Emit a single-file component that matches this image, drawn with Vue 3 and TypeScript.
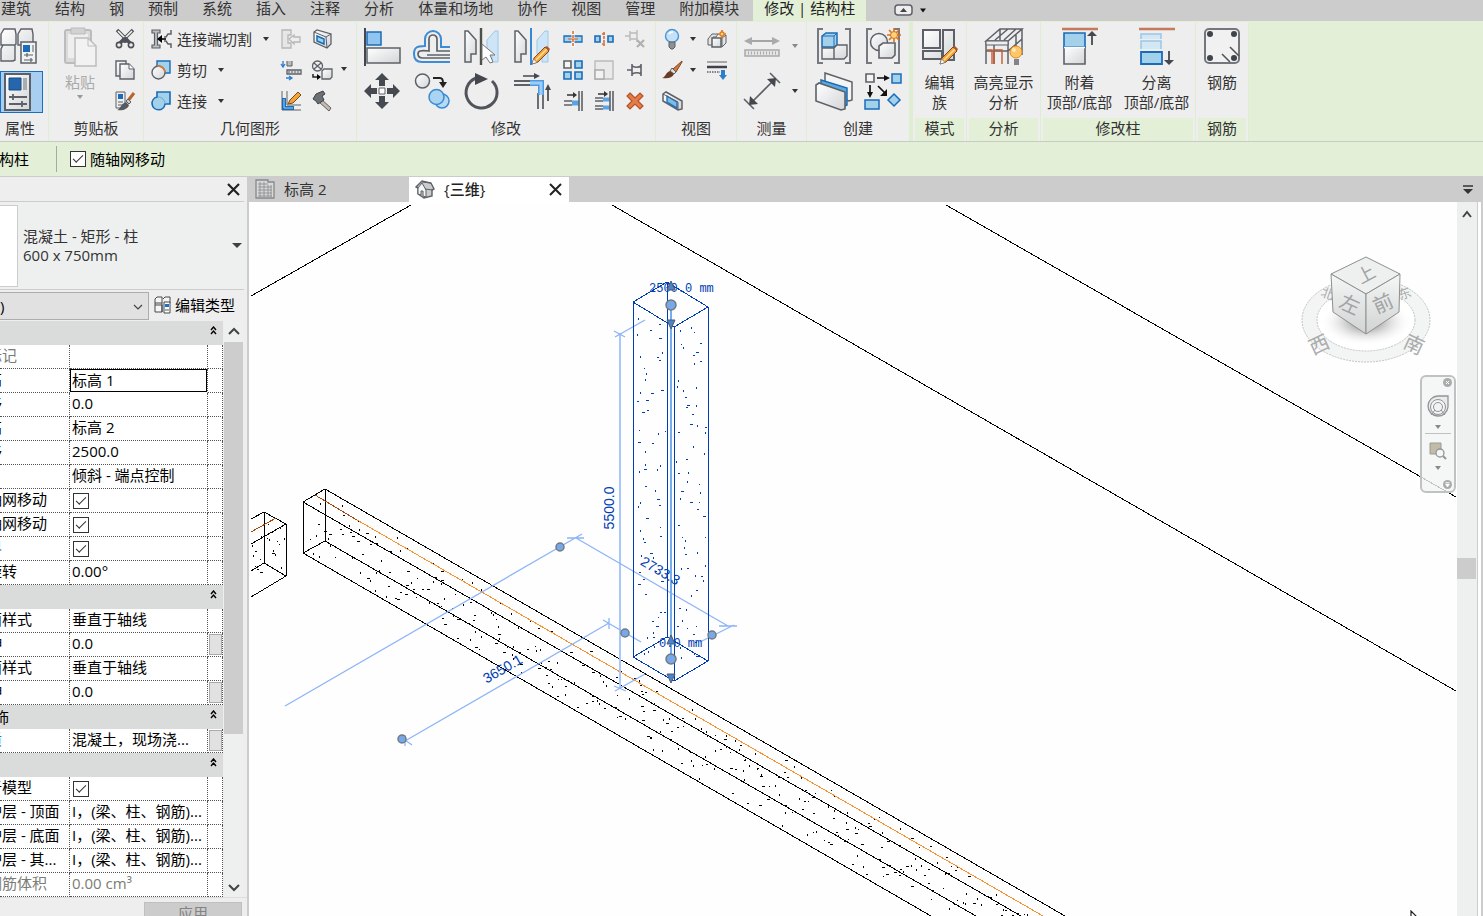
<script setup lang="ts">
import { ref } from 'vue'

const menuTabs: string[] = ['建筑', '结构', '钢', '预制', '系统', '插入', '注释', '分析', '体量和场地', '协作', '视图', '管理', '附加模块']

const G = '#5d6167'
const B = '#1a6cb8'
const LB = '#a4d1ea'
const brackets = `<path d="M7 1H2v34h5M29 1h5v34h-5" fill="none" stroke="#767a80" stroke-width="2"/>`
const burst = (x: number, y: number, r: number): string =>
  `<g stroke="#d9731a" stroke-width="1.6"><path d="M${x - r} ${y}h${2 * r}M${x} ${y - r}v${2 * r}M${x - r + 2} ${y - r + 2}l${2 * r - 4} ${2 * r - 4}M${x + r - 2} ${y - r + 2}l${4 - 2 * r} ${2 * r - 4}"/></g><circle cx="${x}" cy="${y}" r="${r / 2}" fill="#ffd27a" stroke="#d9731a"/>`
const pencil = (x: number, y: number): string =>
  `<g transform="translate(${x} ${y})"><path d="M0 18l2-6L13 1l4 4L6 16z" fill="#f4a338" stroke="#7a4a1c"/><path d="M4 14L15 3" stroke="#ffdf9a" stroke-width="1.5"/><path d="M13 1l2-1 3 3-1 2z" fill="#b4532e"/><path d="M0 18l1.500-5 3.500 3.500z" fill="#fff" stroke="#666" stroke-width=".6"/></g>`

const small: Record<string, string> = {
  cut: `<g fill="none" stroke="#4d5157"><path d="M2 1l14 14M18 1L4 15" stroke-width="3.500"/><path d="M3 2l7 7M17 2l-6 6" stroke="#f5f5f5" stroke-width="1.600"/><circle cx="4" cy="16" r="2.600" fill="#eee" stroke-width="1.600"/><circle cx="16" cy="16" r="2.600" fill="#eee" stroke-width="1.600"/></g><circle cx="10" cy="11" r="3" fill="#4d5157"/>`,
  copy: `<g fill="url(#face)" stroke="${G}" stroke-width="1.400"><path d="M1 1h10v15H1z"/><path d="M5 4h9l5 5v10H5z"/></g><path d="M14 4v5h5" fill="#fff" stroke="${G}"/>`,
  match: `<path d="M1 1h9v16H1z" fill="#eee" stroke="${G}"/><path d="M3 3h5v5H3z" fill="${B}"/><path d="M3 11h5M3 14h5" stroke="${G}"/><path d="M19 2l-7 9" stroke="#b8642c" stroke-width="3"/><path d="M13 8l3 3-2 2-3-3z" fill="#ccc" stroke="${G}"/><path d="M11 11l3 3c-1 4-6 6-12 5 4-1 3-6 9-8z" fill="#565a60"/>`,
  cope: `<path d="M1 1h8v3H6.500v12H9v3H1v-3h2.500V4H1z" fill="#bbbfc3" stroke="${G}" stroke-width="1.200"/><path d="M20 1v4h-3l-2 3h-2M20 19v-4h-3l-2-3h-2" fill="none" stroke="${G}" stroke-width="1.500"/><path d="M15 10H8" stroke="#000" stroke-width="1.600"/><path d="M6 10l5-4v8z"/>`,
  trim: `<path d="M6 1h13v12H6z" fill="${LB}" stroke="${B}" stroke-width="1.400"/><circle cx="7.500" cy="12.500" r="6.500" fill="url(#face)" stroke="${G}" stroke-width="1.400"/><path d="M6 6.500a6.500 6.500 0 0 1 8 6" fill="none" stroke="#e4762c" stroke-width="1.600"/>`,
  join: `<path d="M6 1h13v12h-5a6.500 6.500 0 1 1-8-7z" fill="${LB}" stroke="${B}" stroke-width="1.600"/><path d="M7 6c4 0 7 3 7 7" fill="none" stroke="#6aa7d6"/>`,
  notch: `<path d="M1 1h9v5h-3v8h3v5H1z" fill="#e6e6e6" stroke="#b7b7b7" stroke-width="1.300"/><path d="M8 10l5-4v2h6v5h-6v2z" fill="#eee" stroke="#b7b7b7" stroke-width="1.300"/>`,
  face: `<path d="M2 3l3-2 14 4v10l-4 4L2 13z" fill="url(#face)" stroke="${G}" stroke-width="1.300"/><path d="M2 3l12 5 5-3M14 8l1 11" fill="none" stroke="${G}"/><path d="M5 7l7 3v5l-7-3z" fill="${LB}" stroke="${B}" stroke-width="1.500"/>`,
  beamcut: `<path d="M2 1v5M0 4l2 3 2-3" stroke="#2d7dd2" fill="none" stroke-width="1.300"/><path d="M6 1v5h5V1" fill="#bbb" stroke="${G}"/><path d="M6 10h14v4H6z" fill="#ddd" stroke="${G}" stroke-width="1.300"/><path d="M7 12h12" stroke="${G}" stroke-dasharray="2 1"/><path d="M5 18h5M8 16l3 2-3 2" stroke="#2d7dd2" fill="none" stroke-width="1.300"/>`,
  split: `<circle cx="5.500" cy="6" r="5" fill="#eee" stroke="${G}" stroke-width="1.300"/><path d="M2 3l7 6M9 3L2 9" stroke="${G}" stroke-width="1.300"/><path d="M1 14v3h5" stroke="#222" fill="none" stroke-width="1.500"/><path d="M5 14l4 3-4 3z"/><path d="M10 11l2-2h8v8l-2 2h-8z" fill="url(#face)" stroke="${G}" stroke-width="1.300"/>`,
  wall: `<path d="M1 0v19h19M6 0v14h14" fill="none" stroke="${G}"/><path d="M3 7v10h10" fill="none" stroke="${B}" stroke-width="4"/><path d="M3 8v9h9" fill="none" stroke="${LB}"/><path d="M7 13l2-4 8-8 3 3-8 8z" fill="#f4a338" stroke="#7a4a1c"/>`,
  hammer: `<path d="M9 8l10 9-2 3L7 11z" fill="#c5b9a9" stroke="${G}"/><path d="M1 8l3-5 7-3 2 3-3 2 2 4-6 4-2-3z" fill="#6c6f73" stroke="#3d4044"/>`,
  splitEl: `<path d="M1 7h18v6H1z" fill="${LB}" stroke="${B}" stroke-width="1.300"/><path d="M10 2v16" stroke="#fff" stroke-width="3"/><path d="M10 2v16" stroke="#dc6f36" stroke-width="1.600" stroke-dasharray="3 1"/><path d="M5 10h10" stroke="#dc6f36" stroke-width="1.200"/>`,
  splitGap: `<path d="M1 7h5v6H1zM14 7h5v6h-5z" fill="${LB}" stroke="${B}" stroke-width="1.600"/><path d="M10 3v14M8 5h4M8 15h4" stroke="#dc6f36" stroke-width="1.600" stroke-dasharray="3 1"/>`,
  unpin: `<path d="M0 7h5M5 2v10M5 4h7M5 10h7M12 1v12" stroke="#bababa" fill="none" stroke-width="1.400"/><path d="M12 11l7 7M19 11l-7 7" stroke="#b0b0b0" stroke-width="2.200"/>`,
  array: `<path d="M1 1h7v7H1z" fill="#f4f4f4" stroke="${G}" stroke-width="1.600"/><path d="M12 1h7v7h-7zM1 12h7v7H1zM12 12h7v7h-7z" fill="${LB}" stroke="${B}" stroke-width="1.600"/>`,
  scale: `<path d="M1 1h18v18H1z" fill="#eaeaea" stroke="#bbb" stroke-width="1.400"/><path d="M1 10h9v9H1z" fill="#f2f2f2" stroke="#aaa" stroke-width="1.400"/>`,
  pin: `<path d="M2 10h5M7 4v12M7 6c4 2 6 2 9 0M7 14c4-2 6-2 9 0M16 4v12" stroke="${G}" fill="none" stroke-width="1.600"/>`,
  trimOne: `<path d="M4 4h7" stroke="#333" stroke-width="1.500"/><path d="M10 1l4 3-4 3z" fill="#333"/><path d="M1 10h8M1 14h8" stroke="${G}" stroke-width="1.300"/><path d="M9 9.500h7v5H9z" fill="#5aa4e6"/><path d="M16 0v20M19 0v20" stroke="${G}" stroke-width="1.600"/>`,
  trimMany: `<path d="M4 3h7" stroke="#333" stroke-width="1.500"/><path d="M10 0l4 3-4 3z" fill="#333"/><path d="M1 7h8M1 10h8M1 15h8M1 18h8" stroke="${G}" stroke-width="1.300"/><path d="M9 6.500h7v4H9zM9 14.500h7v4H9z" fill="#5aa4e6"/><path d="M16 0v20M19 0v20" stroke="${G}" stroke-width="1.600"/>`,
  remove: `<path d="M5 2l5 5 5-5 3 3-5 5 5 5-3 3-5-5-5 5-3-3 5-5-5-5z" fill="#e57c48" stroke="#b5522a" stroke-width="1.200"/>`,
  bulb: `<circle cx="10" cy="7" r="6.500" fill="#c4e1f8" stroke="#4d96d2" stroke-width="1.400"/><path d="M7 5a4 4 0 0 1 4-2" stroke="#fff" stroke-width="1.600" fill="none"/><path d="M7 13h6v5l-2 2H9l-2-2z" fill="#8d9196" stroke="${G}"/>`,
  paint: `<path d="M20 1l-9 8 3 3 6-10z" fill="#cf7a3d" stroke="#87451f"/><path d="M10 8l4 4-2 2-4-3z" fill="#ddd" stroke="${G}"/><path d="M8 11l4 3c-2 4-6 5-12 4 4-1 3-5 8-7z" fill="#6a3a22"/>`,
  section: `<path d="M1 3l3-2 16 9v8l-4 1L1 10z" fill="url(#face)" stroke="${G}" stroke-width="1.500"/><path d="M5 5l10 6v6L5 11z" fill="#79bdec" stroke="${B}" stroke-width="1.300"/><path d="M1 3l15 8v8" fill="none" stroke="${G}"/>`,
  displace: `<path d="M1 10l4-5h6l-2 3H6v8H1zM15 9l4-3v8l-4 4z" fill="#e4e4e4" stroke="${G}"/><path d="M5 9h9v9H5z" fill="url(#face)" stroke="${G}" stroke-width="1.500"/>${burst(15, 5, 4)}`,
  linework: `<path d="M0 2h20" stroke="${G}"/><path d="M0 7h20" stroke="#3f4348" stroke-width="2.500"/><path d="M0 12h13" stroke="${G}" stroke-width="1.500" stroke-dasharray="1.500 1"/><path d="M14 10h4v5h2l-4 5-4-5h2z" fill="#2d7fcb"/>`
}

const large: Record<string, string> = {
  types: `<g fill="url(#face)" stroke="${G}" stroke-width="1.400"><path d="M1 6l3-5h11l1 5v10l-1 1H1zM18 6l3-5h11l1 5v10l-1 1H18zM1 21l2-4h12v15l-2 1H1z"/></g><path d="M21 14h15v21H21z" fill="#f2f2f2" stroke="${G}" stroke-width="1.500"/><path d="M23 17h7v7h-7z" fill="${B}"/><path d="M32 17h2v7h-2z" fill="#aaa"/><path d="M24 27h9M24 32h9M27 25v4M31 30v4" stroke="${G}" stroke-width="1.200"/>`,
  props: `<path d="M5 0h25v36H5z" fill="url(#face)" stroke="${G}" stroke-width="2"/><path d="M9 4h12v12H9z" fill="#2566ad" stroke="#174a85"/><path d="M23 4h4v12h-4z" fill="#a9adb1"/><path d="M9 23h18M9 30h18M13 20v6M22 27v6" stroke="${G}" stroke-width="1.800"/>`,
  paste: `<rect x="3" y="2" width="26" height="33" rx="2" fill="#dadada" stroke="#bcbcbc" stroke-width="2"/><path d="M6 6h20v24H6z" fill="#eee"/><path d="M9 0h14v6H9z" fill="#d2d2d2" stroke="#bbb"/><path d="M13 10h13l8 8v20H13z" fill="#f2f2f2" stroke="#bdbdbd" stroke-width="1.500"/><path d="M26 10v8h8" fill="none" stroke="#bdbdbd"/>`,
  align: `<path d="M1 0v38" stroke="#44484d" stroke-width="2"/><path d="M3 4h14v13H3z" fill="#8fc5ee" stroke="${B}" stroke-width="1.500"/><path d="M3 20h33v15H3z" fill="url(#face)" stroke="${G}" stroke-width="1.500"/>`,
  offset: `<path d="M36 19h-9V11a8 8 0 0 0-16 0v7C1 18 0 21 0 26c0 5 3 8 8 8h28" fill="none" stroke="#3d8cd6" stroke-width="2"/><path d="M36 23H23V11a4 4 0 0 0-8 0v12c-9-1-11 0-11 3s2 4 5 4h27M36 27H13" fill="none" stroke="${G}" stroke-width="1.700"/>`,
  mirrorPick: `<path d="M1 3h3l8 9v14H7v8H1z" fill="url(#face)" stroke="${G}" stroke-width="1.500"/><path d="M34 3h-3l-8 9v14h5v8h6z" fill="#cde5f7" stroke="#9cc8ea"/><path d="M17 0v37" stroke="#4b504a" stroke-width="2.400"/><path d="M18 16v16l4-3 4 6 3-1-3-7h5z" fill="#fff" stroke="#777"/>`,
  mirrorDraw: `<path d="M1 3h3l8 9v14H7v8H1z" fill="url(#face)" stroke="${G}" stroke-width="1.500"/><path d="M34 3h-3l-8 9v14h5v8h6z" fill="#cde5f7" stroke="#9cc8ea"/><path d="M17 0v37" stroke="#3688d4" stroke-width="2"/>${pencil(18, 18)}`,
  move: `<g fill="#454a51"><path d="M18 0l7 7h-4v6h-6V7h-4zM18 36l7-7h-4v-6h-6v6h-4zM0 18l7-7v4h6v6H7v4zM36 18l-7-7v4h-6v6h6v4z"/></g><path d="M15 15h6v6h-6z" fill="#fff" stroke="${G}"/>`,
  clone: `<circle cx="8.500" cy="8" r="7" fill="url(#face)" stroke="${G}" stroke-width="1.500"/><path d="M19 5h7q3 0 3 5" fill="none" stroke="#222" stroke-width="2"/><path d="M25 9h8l-4 6z" fill="#222"/><circle cx="28" cy="28" r="7" fill="#b7dbf5" stroke="#3b8ad2" stroke-width="1.500"/><circle cx="22.500" cy="24" r="7.500" fill="#a9d4f2" stroke="#3b8ad2" stroke-width="1.500"/>`,
  rotate: `<path d="M28 8a15.500 15.500 0 1 1-16-3" fill="none" stroke="#51555b" stroke-width="3"/><path d="M11 0l13 6-13 6z" fill="#44484e"/>`,
  corner: `<path d="M0 8h16M0 12h16M24 20v16M29 20v16" stroke="${G}" stroke-width="1.800"/><path d="M16 10h11v12" fill="none" stroke="#4c9ae2" stroke-width="6"/><path d="M16 10h11v12" fill="none" stroke="#9dcdf6" stroke-width="3"/><path d="M9 3h13M34 28V14" stroke="#44484e" stroke-width="1.700"/><path d="M20 0l6 3-6 3zM31 17l3-6 3 6z" fill="#44484e"/>`,
  measure: `<path d="M3 13h30" stroke="#a5a5a5" stroke-width="2"/><path d="M0 13l8-4v8zM36 13l-8-4v8z" fill="#aaa"/><path d="M1 22h34v6H1z" fill="#e5e5e5" stroke="#a9a9a9" stroke-width="1.500"/><path d="M4 25h29" stroke="#aaa" stroke-width="3" stroke-dasharray="1 2"/>`,
  dimension: `<path d="M7 30L31 6M0 26l10 10M26 0l10 10" stroke="${G}" stroke-width="1.600"/><path d="M5 32l1-9 8 8zM32 5l-1 9-8-8z" fill="#44484e"/>`,
  group: `${brackets}<path d="M6 8l4-3h11v12l-3 2H6z" fill="${LB}" stroke="${B}" stroke-width="1.500"/><path d="M6 8h12v11M18 8l3-3" fill="none" stroke="${B}"/><path d="M6 20h12v11H6zM18 20l3-3h10v11l-3 3H18z" fill="url(#face)" stroke="${G}" stroke-width="1.400"/>`,
  part: `${brackets}<circle cx="14" cy="14" r="8.500" fill="url(#face)" stroke="${G}" stroke-width="1.500"/><path d="M14 18l4-3h12v12l-3 3H14z" fill="url(#face)" stroke="${G}" stroke-width="1.600"/>${burst(29, 7, 7)}`,
  assembly: `<path d="M9 0l27 9v18l-3 1L9 19z" fill="#f4f4f4" stroke="${G}" stroke-width="1.500"/><path d="M5 7l26 8v17l-4 2L5 25z" fill="#5fa9e2" stroke="${B}" stroke-width="1.500"/><path d="M0 12l3-2 26 9v17l-4 1L0 28z" fill="url(#face)" stroke="${G}" stroke-width="1.600"/>`,
  similar: `<path d="M1 1h8v8H1z" fill="#f4f4f4" stroke="${G}" stroke-width="1.600"/><path d="M27 1h9v9h-9zM0 27h14v9H0zM29 21l6 6-6 6-6-6z" fill="${LB}" stroke="${B}" stroke-width="1.500"/><path d="M12 5h9M5 12v8M13 13l7 7" stroke="#111" stroke-width="1.700"/><path d="M19 2l6 3-6 3zM2 19h6l-3 6zM22 16v7h-7z" fill="#111"/>`,
  family: `<g fill="url(#face)" stroke="${G}" stroke-width="2"><path d="M1 2h17v18H1zM21 2h11v30H21zM1 23h19v8H1z"/></g>${pencil(18, 18)}`,
  highlight: `<path d="M0 13L14 1h22L22 13zM0 13v23M22 13v23M36 1v26M8 13v23M14 1v11M0 23h22l14-12M9 12L22 1M18 12L30 1M30 7v20" fill="none" stroke="${G}" stroke-width="1.500"/><path d="M0 13h22v4H0z" fill="#eee" stroke="${G}"/><path d="M1 22h5v14M8 36V22h8v14" fill="none" stroke="#c85a30" stroke-width="1.400"/><circle cx="30" cy="24" r="6" fill="#ffc768" stroke="#e18a25"/><circle cx="28" cy="22" r="2" fill="#ffe9be"/><path d="M28 31h5v6h-5z" fill="#81858a"/>`,
  attach: `<path d="M0 1h36" stroke="#c57a5b" stroke-width="2.500"/><path d="M2 19h21v17H2z" fill="url(#face)" stroke="${G}" stroke-width="1.600"/><path d="M2 5h21v14H2z" fill="${LB}" stroke="${B}" stroke-width="1.600"/><path d="M2 19.500h21" stroke="#fff" stroke-width="1.500"/><path d="M30 17V6" stroke="#44484e" stroke-width="1.800"/><path d="M25 8l5-5 5 5z" fill="#44484e"/>`,
  detach: `<path d="M0 1h36" stroke="#c57a5b" stroke-width="2.500"/><path d="M2 11V6h20v5M2 21v-8h20v8" fill="#d4e7f5" stroke="#9bc6e6" stroke-width="1.500"/><path d="M2 24h21v12H2z" fill="${LB}" stroke="${B}" stroke-width="1.800"/><path d="M30 23v10" stroke="#44484e" stroke-width="1.800"/><path d="M25 32h10l-5 5z" fill="#44484e"/>`,
  rebar: `<rect x="1" y="1" width="34" height="34" rx="4" fill="#f1f1f1" stroke="#73777c" stroke-width="2"/><g fill="#3f434a"><circle cx="6" cy="6" r="3"/><circle cx="30" cy="6" r="3"/><circle cx="6" cy="30" r="3"/><circle cx="30" cy="30" r="3"/></g><path d="M26 19l9 9M18 26l8 8" stroke="#555" stroke-width="1.600"/>`
}

const modifyLarge: string[] = ['align', 'offset', 'mirrorPick', 'mirrorDraw', 'move', 'clone', 'rotate', 'corner']
const modifySmall: string[] = ['splitEl', 'splitGap', 'unpin', 'array', 'scale', 'pin', 'trimOne', 'trimMany', 'remove']
const geometry = [
  { icon: 'cope', text: '连接端切割' },
  { icon: 'trim', text: '剪切' },
  { icon: 'join', text: '连接' }
]

interface Row {
  kind: 'group' | 'row'
  label: string
  value?: string
  check?: boolean
  edit?: boolean
  more?: boolean
  tone?: string
}
const rows: Row[] = [
  { kind: 'group', label: '限制条件' },
  { kind: 'row', label: '柱定位标记', value: '', tone: 'dim' },
  { kind: 'row', label: '底部标高', value: '标高 1', edit: true },
  { kind: 'row', label: '底部偏移', value: '0.0' },
  { kind: 'row', label: '顶部标高', value: '标高 2' },
  { kind: 'row', label: '顶部偏移', value: '2500.0' },
  { kind: 'row', label: '柱样式', value: '倾斜 - 端点控制' },
  { kind: 'row', label: '底部随轴网移动', check: true },
  { kind: 'row', label: '顶部随轴网移动', check: true },
  { kind: 'row', label: '房间边界', check: true, tone: 'link' },
  { kind: 'row', label: '横截面旋转', value: '0.00°' },
  { kind: 'group', label: '构造' },
  { kind: 'row', label: '底部截面样式', value: '垂直于轴线' },
  { kind: 'row', label: '底部延伸', value: '0.0', more: true },
  { kind: 'row', label: '顶部截面样式', value: '垂直于轴线' },
  { kind: 'row', label: '顶部延伸', value: '0.0', more: true },
  { kind: 'group', label: '材质和装饰' },
  { kind: 'row', label: '结构材质', value: '混凝土，现场浇...', more: true, tone: 'link' },
  { kind: 'group', label: '结构' },
  { kind: 'row', label: '启用分析模型', check: true },
  { kind: 'row', label: '钢筋保护层 - 顶面', value: 'I，(梁、柱、钢筋)...' },
  { kind: 'row', label: '钢筋保护层 - 底面', value: 'I，(梁、柱、钢筋)...' },
  { kind: 'row', label: '钢筋保护层 - 其...', value: 'I，(梁、柱、钢筋)...' },
  { kind: 'row', label: '估计的钢筋体积', value: '0.00 cm³', tone: 'dim' }
]

const moveWithGrid = ref(true)

// Concrete hatch: short strokes scattered over a parallelogram o + s*a + t*b.
type Pt = [number, number]
function speckle(seed: number, count: number, o: Pt, a: Pt, b: Pt): string {
  let s = seed
  const rnd = (): number => {
    s = (s + 0x6d2b79f5) | 0
    let t = Math.imul(s ^ (s >>> 15), 1 | s)
    t = (t + Math.imul(t ^ (t >>> 7), 61 | t)) ^ t
    return ((t ^ (t >>> 14)) >>> 0) / 4294967296
  }
  const marks = ['h1', 'h2', 'v2', 'l1 2', 'l-1 2', 'h3', 'l2 1']
  let d = ''
  for (let i = 0; i < count; i++) {
    const u = (i + rnd()) / count
    const v = rnd()
    const m = marks[Math.floor(rnd() * marks.length)]
    d += `M${Math.round(o[0] + u * a[0] + v * b[0])} ${Math.round(o[1] + u * a[1] + v * b[1])}${m}`
  }
  return d
}
const beamMarks = speckle(71, 300, [322, 493], [740, 427], [-17, 58]) + speckle(9, 60, [312, 502], [740, 427], [-5, 42])
const stubMarks = speckle(13, 12, [266, 522], [18, 6], [0, 44]) + speckle(29, 9, [252, 538], [10, -6], [0, 46])
const columnMarks = speckle(5, 62, [637, 308], [0, 345], [28, 16]) + speckle(47, 66, [677, 328], [0, 342], [29, -17])
const grips: Pt[] = [[560, 547], [625, 633], [712, 635], [402, 739]]
</script>

<template>
  <div class="app">
    <svg class="defs" aria-hidden="true">
      <defs>
        <linearGradient id="face" x1="0" y1="0" x2="1" y2="1">
          <stop offset="0" stop-color="#ffffff" /><stop offset="1" stop-color="#d3d5d8" />
        </linearGradient>
        <linearGradient id="cubeL" x1="0" y1="0" x2="0" y2="1">
          <stop offset="0" stop-color="#f5f6f6" /><stop offset="1" stop-color="#d2d4d4" />
        </linearGradient>
        <radialGradient id="shade">
          <stop offset="0.3" stop-color="#b5b5b5" /><stop offset="1" stop-color="#fff" stop-opacity="0" />
        </radialGradient>
      </defs>
    </svg>

    <nav class="menu">
      <button v-for="t in menuTabs" :key="t" class="menu-tab">{{ t }}</button>
      <button class="menu-tab active">修改 | 结构柱</button>
      <button class="collapse" aria-label="最小化">
        <svg width="32" height="14" viewBox="0 0 32 14">
          <rect x="1" y="2" width="17" height="10" rx="3" fill="#eee" stroke="#5c6268" stroke-width="1.500" />
          <path d="M6 9h7L9.500 5z" fill="#444" /><path d="M26 5.500h6l-3 4z" fill="#111" />
        </svg>
      </button>
    </nav>

    <section class="ribbon">
      <div class="panel p-select">
        <div class="body stack">
          <button class="big"><svg viewBox="0 0 36 36" v-html="large.types" /></button>
          <button class="big pressed"><svg viewBox="0 0 36 36" v-html="large.props" /></button>
        </div>
        <h2>属性</h2>
      </div>

      <div class="panel p-clip">
        <div class="body">
          <button class="tool disabled">
            <svg class="tall" viewBox="0 0 36 40" v-html="large.paste" />
            <span>粘贴</span><i class="caret" />
          </button>
          <div class="small-col">
            <button v-for="n in ['cut', 'copy', 'match']" :key="n" class="sm"><svg viewBox="0 0 20 20" v-html="small[n]" /></button>
          </div>
        </div>
        <h2>剪贴板</h2>
      </div>

      <div class="panel p-geo">
        <div class="body">
          <div class="geo-list">
            <button v-for="g in geometry" :key="g.icon" class="geo">
              <svg viewBox="0 0 20 20" v-html="small[g.icon]" /><span>{{ g.text }}</span><i class="caret" />
            </button>
          </div>
          <div class="small-col">
            <button v-for="n in ['notch', 'beamcut', 'wall']" :key="n" class="sm"><svg viewBox="0 0 20 20" v-html="small[n]" /></button>
          </div>
          <div class="small-col">
            <button v-for="n in ['face', 'split', 'hammer']" :key="n" class="sm"><svg viewBox="0 0 20 20" v-html="small[n]" /></button>
          </div>
          <i class="caret side" />
        </div>
        <h2>几何图形</h2>
      </div>

      <div class="panel p-mod">
        <div class="body">
          <div class="big-grid four">
            <button v-for="n in modifyLarge" :key="n" class="big"><svg viewBox="0 0 36 36" v-html="large[n]" /></button>
          </div>
          <div class="small-grid">
            <button v-for="n in modifySmall" :key="n" class="sm"><svg viewBox="0 0 20 20" v-html="small[n]" /></button>
          </div>
        </div>
        <h2>修改</h2>
      </div>

      <div class="panel p-view">
        <div class="body">
          <div class="small-col">
            <button v-for="n in ['bulb', 'paint', 'section']" :key="n" class="sm"><svg viewBox="0 0 20 20" v-html="small[n]" /></button>
          </div>
          <div class="small-col carets">
            <span><i class="caret" /></span><span><i class="caret" /></span>
          </div>
          <div class="small-col">
            <button v-for="n in ['displace', 'linework']" :key="n" class="sm"><svg viewBox="0 0 20 20" v-html="small[n]" /></button>
          </div>
        </div>
        <h2>视图</h2>
      </div>

      <div class="panel p-meas">
        <div class="body stack">
          <button class="big with-caret"><svg viewBox="0 0 36 36" v-html="large.measure" /><i class="caret grey" /></button>
          <button class="big with-caret"><svg viewBox="0 0 36 36" v-html="large.dimension" /><i class="caret" /></button>
        </div>
        <h2>测量</h2>
      </div>

      <div class="panel p-create">
        <div class="body">
          <div class="big-grid two">
            <button v-for="n in ['group', 'part', 'assembly', 'similar']" :key="n" class="big"><svg viewBox="0 0 36 36" v-html="large[n]" /></button>
          </div>
        </div>
        <h2>创建</h2>
      </div>

      <div class="panel ctx p-mode">
        <div class="body"><button class="tool"><svg viewBox="0 0 36 36" v-html="large.family" /><span>编辑</span><span>族</span></button></div>
        <h2>模式</h2>
      </div>
      <div class="panel ctx p-ana">
        <div class="body"><button class="tool"><svg viewBox="0 0 36 36" v-html="large.highlight" /><span>高亮显示</span><span>分析</span></button></div>
        <h2>分析</h2>
      </div>
      <div class="panel ctx p-col">
        <div class="body">
          <button class="tool"><svg viewBox="0 0 36 36" v-html="large.attach" /><span>附着</span><span>顶部/底部</span></button>
          <button class="tool"><svg viewBox="0 0 36 36" v-html="large.detach" /><span>分离</span><span>顶部/底部</span></button>
        </div>
        <h2>修改柱</h2>
      </div>
      <div class="panel ctx p-rebar">
        <div class="body"><button class="tool"><svg viewBox="0 0 36 36" v-html="large.rebar" /><span>钢筋</span></button></div>
        <h2>钢筋</h2>
      </div>
    </section>

    <section class="options">
      <div class="context"><span>修改 | 结构柱</span></div>
      <label class="opt"><input v-model="moveWithGrid" type="checkbox" class="tick" />随轴网移动</label>
    </section>

    <main class="work">
      <aside class="props">
        <header class="props-head">
          <button class="close" aria-label="关闭属性"><svg width="13" height="13" viewBox="0 0 13 13"><path d="M1 1l11 11M12 1L1 12" stroke="#222" stroke-width="2.200" /></svg></button>
        </header>
        <button class="type">
          <span class="thumb" />
          <span class="type-name">混凝土 - 矩形 - 柱<br />600 x 750mm</span>
          <i class="caret large" />
        </button>
        <div class="filter">
          <div class="select-wrap">
            <select aria-label="类型过滤器"><option>结构柱 (1)</option></select>
            <svg width="10" height="6" viewBox="0 0 10 6"><path d="M1 1l4 4 4-4" fill="none" stroke="#444" stroke-width="1.200" /></svg>
          </div>
          <button class="edit-type">
            <svg width="18" height="18" viewBox="0 0 18 18">
              <path d="M1 3l2-2h5v6H1zM9 3l2-2h5v6M1 9h7v7H1zM1 7v2M8 7v9" fill="#f6f6f6" stroke="#44484c" />
              <path d="M10 6h6v11h-6z" fill="#fff" stroke="#44484c" /><path d="M11 8h4v3h-4z" fill="#1c73c4" /><path d="M11 14h4" stroke="#555" />
            </svg>编辑类型
          </button>
        </div>
        <div class="grid-area">
          <table class="grid">
            <colgroup><col class="c1" /><col class="c2" /><col class="c3" /></colgroup>
            <tbody>
              <tr v-for="(r, i) in rows" :key="i" :class="r.kind">
                <template v-if="r.kind === 'group'">
                  <th colspan="3">
                    <div class="group-line">
                      <span>{{ r.label }}</span>
                      <svg width="7" height="9" viewBox="0 0 7 9"><path d="M1 4l2.500-3L6 4M1 8l2.500-3L6 8" fill="none" stroke="#000" stroke-width="1.400" /></svg>
                    </div>
                  </th>
                </template>
                <template v-else>
                  <td class="name" :class="r.tone">{{ r.label }}</td>
                  <td class="val" :class="[r.tone === 'dim' ? 'dim' : '', { focus: r.edit, checks: r.check }]">
                    <input v-if="r.check" type="checkbox" class="tick" checked :aria-label="r.label" />
                    <input v-else-if="r.edit" type="text" class="cell" :value="r.value" :aria-label="r.label" />
                    <template v-else>{{ r.value }}</template>
                  </td>
                  <td class="more"><button v-if="r.more" aria-label="关联参数" /></td>
                </template>
              </tr>
            </tbody>
          </table>
          <div class="vbar">
            <svg width="12" height="8" viewBox="0 0 12 8"><path d="M1 7l5-5 5 5" fill="none" stroke="#444" stroke-width="2" /></svg>
            <div class="thumb-bar" />
            <svg class="down" width="12" height="8" viewBox="0 0 12 8"><path d="M1 1l5 5 5-5" fill="none" stroke="#444" stroke-width="2" /></svg>
          </div>
        </div>
        <footer class="props-foot"><button class="apply" disabled>应用</button></footer>
      </aside>

      <section class="view">
        <div class="view-tabs">
          <button class="vtab">
            <svg width="20" height="20" viewBox="0 0 20 20"><path d="M1 1h12v2h6v16H1z" fill="#d8d8d8" stroke="#85898c" stroke-width="1.300" /><path d="M3 5h10M3 8h14M3 11h14M3 14h14M3 17h14M5 3v15M9 3v15M13 6v12M16 6v12" stroke="#92969a" /></svg>
            标高 2
          </button>
          <div class="vtab current">
            <svg width="20" height="20" viewBox="0 0 20 20"><path d="M1 8l6-6 9 2 3 6-2 1v6l-8 2-6-4v-6z" fill="#c9cccf" stroke="#5d6165" stroke-width="1.400" /><path d="M3 9l4-5 4 7v7l-3-1v-5H6v4l-3-1z" fill="#f4f5f5" stroke="#5d6165" /><path d="M7 3l9 1M10 10l8 1" stroke="#5d6165" /></svg>
            <span>{三维}</span>
            <button class="close" aria-label="关闭视图"><svg width="13" height="13" viewBox="0 0 13 13"><path d="M1 1l11 11M12 1L1 12" stroke="#222" stroke-width="2" /></svg></button>
          </div>
          <button class="tabs-menu" aria-label="视图列表"><svg width="10" height="9" viewBox="0 0 10 9"><path d="M0 1h10" stroke="#333" stroke-width="1.500" /><path d="M0 4h10L5 9z" fill="#333" /></svg></button>
        </div>

        <div class="stage">
          <div class="canvas">
            <svg class="scene" aria-label="三维视图">
              <g transform="translate(-249 -202)">
                <g class="ink">
                  <path d="M251 296L411 205M612 205L1456 691M946 205L1456 497" />
                  <path d="M251 519L264 512L286 524V576L251 597M264 512V563L286 576M264 563L251 571M251 544L286 524" />
                  <path d="M1065 916L325 489L303 502V553L931 916M303 502L1021 916M325 489V541L976 916M325 541L303 553" />
                  <path :d="beamMarks" /><path :d="stubMarks" />
                </g>
                <path d="M251 532L276 518M315 495L357 520" class="rust" />
                <path d="M357 520L1043 916" class="orange" />

                <path d="M620 333V688" class="height-line" />
                <g class="dim-line">
                  <path d="M615 337L645 320M614 331L625 337M615 691L645 674M614 686L626 691" />
                  <path d="M285 706L582 534M567 538H584M576 538L728 626M719 626H737M700 642L734 625" />
                  <path d="M405 741L609 623M609 618V629M603 620L641 642M405 735V746M402 738L412 745" />
                </g>
                <g class="column">
                  <path d="M633 302L667 282L708 307L674 327ZM633 302V657M667 282V637M674 327V681M708 307V661M633 657L674 681L708 661L667 637Z" />
                  <path :d="columnMarks" />
                </g>
                <path d="M671 305V659" stroke="#74aeef" stroke-width="2" fill="none" />
                <g class="mono">
                  <text x="649" y="292">2500.0 mm</text>
                  <text x="659" y="647">0.0 mm</text>
                </g>
                <g class="handle">
                  <path d="M671 281L675 290H667ZM671 329L675 320H667ZM671 635L675 644H667ZM671 683L675 674H667Z" />
                  <circle cx="671" cy="305" r="5" /><circle cx="671" cy="659" r="5" />
                  <circle v-for="(g, i) in grips" :key="i" :cx="g[0]" :cy="g[1]" r="4" />
                </g>
                <g class="dim-text">
                  <text transform="translate(614 508) rotate(-90)">5500.0</text>
                  <text transform="translate(658 575) rotate(30)">2733.3</text>
                  <text transform="translate(505 673) rotate(-30)">3650.1</text>
                </g>
              </g>
            </svg>

            <svg class="cube" width="132" height="112" viewBox="1300 254 132 112" aria-label="视图立方">
              <ellipse cx="1366" cy="320" rx="64" ry="42" fill="#f3f5f4" stroke="#c2c4c4" stroke-dasharray="2 1" />
              <ellipse cx="1366" cy="320" rx="49" ry="31" fill="#fff" stroke="#c2c4c4" stroke-dasharray="2 1" />
              <ellipse cx="1366" cy="322" rx="46" ry="24" fill="url(#shade)" />
              <g class="compass">
                <text transform="translate(1322 351) rotate(-25)" font-size="20">西</text>
                <text transform="translate(1411 351) rotate(25)" font-size="20">南</text>
                <text transform="translate(1326 298) rotate(20)" font-size="13">北</text>
                <text transform="translate(1406 298) rotate(-20)" font-size="13">东</text>
              </g>
              <path d="M1366 257L1400 274L1366 294L1331 274Z" fill="#eef0f0" stroke="#8d9090" />
              <path d="M1331 274L1366 294V334L1333 312Z" fill="url(#cubeL)" stroke="#8d9090" />
              <path d="M1400 274L1366 294V334L1399 312Z" fill="url(#cubeL)" stroke="#8d9090" />
              <g fill="#a0a3a3" font-size="20" text-anchor="middle">
                <text transform="translate(1347 311) rotate(24)">左</text>
                <text transform="translate(1386 310) rotate(-24)">前</text>
                <text transform="translate(1369 280) rotate(-28)" font-size="18">上</text>
              </g>
            </svg>

            <div class="navbar">
              <button class="nav-end" aria-label="关闭导航栏"><svg width="9" height="9" viewBox="0 0 9 9"><circle cx="4.500" cy="4.500" r="4.500" fill="#a9abac" /><path d="M3 3l3 3M6 3L3 6" stroke="#fff" /></svg></button>
              <button aria-label="控制盘"><svg width="24" height="24" viewBox="0 0 24 24"><path d="M12 1h10v11A10 10 0 1 1 12 1z" fill="#e9ebec" stroke="#919496" stroke-width="1.300" /><circle cx="12" cy="12" r="7.500" fill="#f4f5f5" stroke="#919496" /><circle cx="12" cy="12" r="4.500" fill="#f2f3f4" stroke="#919496" /><path d="M5 20l4-5M19 20l-4-5" stroke="#919496" /></svg></button>
              <i class="caret mini" />
              <hr />
              <button aria-label="缩放"><svg width="18" height="18" viewBox="0 0 18 18"><path d="M1 1h11v11H1z" fill="#c2bba8" stroke="#999c9a" /><circle cx="11" cy="11" r="4" fill="#f5f5f5" stroke="#929699" stroke-width="1.300" /><path d="M14 14l3 3" stroke="#929699" stroke-width="2" /></svg></button>
              <i class="caret mini" />
              <button class="nav-end last" aria-label="自定义"><svg width="9" height="9" viewBox="0 0 9 9"><circle cx="4.500" cy="4.500" r="4.500" fill="#a9abac" /><path d="M2.500 4h4l-2 3zM2.500 2.500h4" fill="#fff" stroke="#fff" stroke-width=".7" /></svg></button>
            </div>
            <svg class="cursor" width="12" height="18" viewBox="0 0 12 18"><path d="M1 1v14l4-4h6z" fill="#fff" stroke="#222" stroke-width="1.200" /></svg>
          </div>
          <div class="vscroll">
            <svg width="10" height="8" viewBox="0 0 10 8"><path d="M1 7l4-5 4 5" fill="none" stroke="#444" stroke-width="2" /></svg>
            <div class="vthumb" />
          </div>
          <div class="edge" />
        </div>
      </section>
    </main>
  </div>
</template>

<style>
html, body { margin: 0; overflow: hidden; }
</style>

<style scoped>
.app {
  height: 100vh;
  display: flex;
  flex-direction: column;
  overflow: hidden;
  background: #eee;
  color: #333;
  font: 15px/20px "Open Sans", "Noto Sans CJK SC", sans-serif;
}
.defs { position: absolute; width: 0; height: 0; }
button { font: inherit; color: inherit; background: none; border: 0; padding: 0; margin: 0; white-space: nowrap; }
button svg { display: block; flex: none; }
.caret { display: block; flex: none; width: 0; height: 0; border: 3px solid transparent; border-top: 4px solid #333; border-bottom: 0; }
.caret.grey { border-top-color: #888; }
.caret.large { border-width: 5px 5px 0; border-top-color: #3d4043; }
.caret.mini { border-top-color: #888; }

.menu { flex: none; height: 21px; display: flex; align-items: stretch; background: #ccc; padding-left: 1px; }
.menu-tab { line-height: 17px; height: 21px; padding-bottom: 4px; margin-right: 24px; }
.menu-tab.active { background: #e3f0d7; margin: 0 28px 0 -10px; padding: 0 11px 4px; color: #222; }
.collapse { padding-bottom: 2px; display: flex; align-items: center; }

.ribbon { flex: none; display: flex; height: 119px; padding-top: 1px; background: #e3f0d7; border-bottom: 1px solid #c6ccc2; }
.panel { flex: none; display: flex; flex-direction: column; background: #eee; border-right: 1px solid #dfeed2; box-sizing: border-box; }
.body { flex: 1; display: flex; padding-top: 1px; justify-content: center; }
h2 { margin: 0; font-size: 15px; font-weight: 400; line-height: 20px; height: 23px; text-align: center; }
.p-select { width: 49px; }
.p-select h2 { margin-right: 8px; }
.p-clip { width: 95px; }
.p-geo { width: 213px; }
.p-mod { width: 299px; }
.p-view { width: 81px; }
.p-meas { width: 70px; }
.p-create { width: 106px; border-right-width: 4px; }
.p-mode { width: 54px; }
.p-ana { width: 74px; }
.p-col { width: 155px; }
.p-rebar { width: 53px; }
.ctx h2 { background: #e3f0d7; margin: 0 2px; }
.stack { flex-direction: column; justify-content: flex-start; }
.big { width: 50px; height: 45px; display: flex; align-items: center; justify-content: center; }
.big svg, .tool svg { width: 36px; height: 36px; overflow: visible; }
.p-select .big { justify-content: flex-start; width: 43px; }
.p-select .pressed { background: #a9cff0; box-shadow: inset 0 0 0 1px #1a6fc0; height: 42px; margin-top: 3px; }
.big-grid { display: grid; align-content: start; }
.four { grid-template-columns: repeat(4, 50px); }
.two { grid-template-columns: repeat(2, 49px); }
.two .big { width: 49px; }
.sm { width: 31px; height: 31px; display: flex; align-items: center; justify-content: center; }
.sm svg, .geo svg { width: 20px; height: 20px; overflow: visible; }
.small-grid { display: grid; grid-template-columns: repeat(3, 31px); align-content: start; }
.p-mod .body, .p-geo .body, .p-view .body, .p-clip .body { justify-content: flex-start; }
.tool { flex: 1; display: flex; flex-direction: column; align-items: center; padding-top: 5px; }
.tool span { line-height: 20px; }
.tool svg { margin-bottom: 8px; }
.tool .tall { height: 40px; margin-bottom: 4px; }
.tool .caret { margin-top: 3px; }
.disabled { color: #aaa; }
.disabled .caret { border-top-color: #999; }
.p-clip .tool { flex: none; width: 58px; margin-left: 2px; }
.geo-list { width: 131px; padding-left: 7px; box-sizing: border-box; }
.geo { height: 31px; display: flex; align-items: center; gap: 6px; }
.geo .caret { margin-left: 5px; }
.p-geo .side { margin: 44px 0 0 4px; }
.carets { width: 11px; }
.carets span { height: 31px; display: flex; align-items: center; justify-content: center; }
.p-view .carets + .small-col { margin-left: 3px; }
.with-caret { width: 69px; gap: 12px; padding-left: 7px; justify-content: flex-start; box-sizing: border-box; }

.options { flex: none; height: 34px; display: flex; align-items: center; background: #e3f0d7; color: #000; }
.context { width: 56px; height: 26px; display: flex; align-items: center; border-right: 1px solid #a8a8a8; overflow: hidden; box-sizing: content-box; justify-content: flex-end; }
.context span { white-space: nowrap; padding-right: 27px; }
.opt { display: flex; align-items: center; gap: 4px; padding-left: 13px; }
.tick { appearance: none; flex: none; width: 16px; height: 16px; margin: 0; border: 1px solid #333; background: #fff; display: inline-grid; place-items: center; box-sizing: border-box; }
.tick:checked::after { content: ""; width: 9px; height: 4px; border: solid #333; border-width: 0 0 1px 1px; transform: rotate(-45deg); margin-bottom: 3px; }

.work { flex: 1; min-height: 0; display: flex; background: #ccc; padding-top: 1px; }
.props { flex: none; width: 247px; display: flex; flex-direction: column; background: #eee; margin-right: 2px; overflow: hidden; }
.props-head { flex: none; height: 24px; border-bottom: 1px solid #ccc; margin-right: 3px; display: flex; align-items: center; justify-content: flex-end; padding-right: 4px; }
.close { display: flex; }
.type { flex: none; height: 88px; margin-right: 3px; background: #eef0f0; border-bottom: 1px solid #ccc; display: flex; align-items: center; text-align: left; box-sizing: border-box; }
.thumb { width: 17px; height: 80px; border: 1px solid #ccc; border-left: 0; background: #fff; flex: none; }
.type-name { flex: 1; padding-left: 5px; line-height: 19px; }
.type .caret { margin-right: 2px; }
.filter { flex: none; height: 31px; padding-top: 1px; box-sizing: border-box; display: flex; align-items: center; color: #000; }
.select-wrap { position: relative; flex: none; width: 149px; height: 28px; display: flex; justify-content: flex-end; }
.select-wrap select { appearance: none; flex: none; width: 219px; height: 28px; padding: 0 0 0 7px; border: 1px solid #adadad; border-radius: 0; background: #e1e1e1; color: #000; font: inherit; }
.select-wrap svg { position: absolute; right: 6px; top: 12px; }
.edit-type { display: flex; align-items: center; gap: 3px; padding: 0 0 3px 5px; }
.grid-area { flex: 1; min-height: 0; display: flex; }
.grid { flex: none; align-self: flex-start; width: 223px; table-layout: fixed; border-spacing: 0; background: #fff; color: #000; }
.c1 { width: 70px; }
.c2 { width: 138px; }
.c3 { width: 15px; }
.grid tr { height: 24px; }
.grid td { height: 23px; padding: 0; border-bottom: 1px dotted #555; border-right: 1px dotted #555; overflow: hidden; white-space: nowrap; line-height: 20px; vertical-align: top; }
.grid th { height: 24px; padding: 0; font-weight: 400; background: #dadcdb; }
.group-line { display: flex; height: 24px; justify-content: space-between; align-items: center; padding-right: 6px; overflow: hidden; }
.group-line span { margin-left: -66px; }
.group-line svg { margin-bottom: 6px; }
.name { text-indent: -58px; }
.grid .val { padding-left: 2px; }
.grid .checks { vertical-align: middle; line-height: 0; }
.val .tick { margin-left: 1px; }
.dim { color: #7a7c76; }
.name.link { color: #2a72c8; }
.grid .focus { padding: 0; border-bottom-style: solid; border-bottom-color: #fff; }
.cell { width: 137px; height: 23px; box-sizing: border-box; border: 1px solid #000; padding: 0 0 3px 1px; font: inherit; display: block; outline: 0; }
.more button { display: block; width: 13px; height: 21px; background: #e1e1e1; border: 1px solid #aaa; margin: 1px 0 0 1px; }
.vbar { width: 19px; margin: 0 auto 0 1px; background: #eef0f0; display: flex; flex-direction: column; align-items: center; }
.vbar > svg { margin: 6px 0 7px; flex: none; }
.thumb-bar { flex: 0 1 392px; width: 19px; background: #cdcdcd; }
.vbar .down { margin: auto 0 5px; }
.props-foot { flex: none; height: 19px; border-top: 1px solid #ddd; box-sizing: border-box; overflow: hidden; padding: 4px 5px 0; display: flex; justify-content: flex-end; }
.apply { width: 98px; height: 28px; background: #ccc; border: 1px solid #bfbfbf; color: #838383; line-height: 20px; padding-bottom: 6px; }

.view { flex: 1; min-width: 0; display: flex; flex-direction: column; }
.view-tabs { flex: none; height: 25px; display: flex; background: #ccc; }
.vtab { width: 160px; display: flex; align-items: center; gap: 9px; padding: 0 0 1px 6px; box-sizing: border-box; }
.vtab.current { background: #fff; color: #222; font-weight: 500; padding-right: 7px; }
.vtab.current .close { margin-left: auto; }
.tabs-menu { margin-left: auto; padding-right: 10px; display: flex; align-items: center; }
.stage { flex: 1; min-height: 0; display: flex; }
.canvas { flex: 1; min-width: 0; position: relative; background: #fefefe; overflow: hidden; }
.scene { position: absolute; inset: 0; width: 100%; height: 100%; }
.ink path, .column path, .rust, .orange, .height-line { fill: none; stroke-width: 1; shape-rendering: crispEdges; }
.ink path { stroke: #000; }
.column path { stroke: #003cb4; }
.rust { stroke: #a44a10; }
.orange { stroke: #f79232; }
.height-line { stroke: #a8c7fc; stroke-width: 2; }
.dim-line { fill: none; stroke: #8db4f8; stroke-width: 1.3; }
.handle { fill: #4a84cd; stroke: #4d5a6b; stroke-width: 1; }
.handle circle { fill: #77a9e9; stroke: #74797f; stroke-width: 1.5; }
.mono { font: 12px "Liberation Mono", monospace; fill: #0040b4; }
.dim-text { font: 14px "Liberation Sans", sans-serif; fill: #0040b4; text-anchor: middle; }
.compass { fill: #a9acac; text-anchor: middle; }
.cube { position: absolute; top: 52px; right: 25px; }
.navbar { position: absolute; top: 173px; right: 1px; width: 36px; height: 118px; box-sizing: border-box; border: 2px solid #c0c2c2; border-radius: 6px; background: rgba(243, 245, 244, 0.8); display: flex; flex-direction: column; align-items: center; }
.navbar .nav-end { align-self: flex-end; margin: 1px 2px 8px 0; }
.navbar .last { margin: auto 2px 2px 0; }
.navbar hr { width: 26px; height: 1px; border: 0; background: #c0c2c2; margin: 4px 0 8px; flex: none; }
.navbar .mini { margin-top: 6px; }
.cursor { position: absolute; bottom: -12px; right: 35px; }
.vscroll { flex: none; width: 20px; background: #eef0ef; display: flex; flex-direction: column; align-items: center; padding-top: 8px; box-sizing: border-box; }
.vscroll svg { flex: none; }
.vthumb { width: 19px; height: 21px; background: #ccc; margin-top: 340px; flex: none; align-self: flex-start; }
.edge { flex: none; width: 6px; box-sizing: border-box; background: #fff; border-left: 1px solid #ccc; border-right: 2px solid #ccc; }
</style>
